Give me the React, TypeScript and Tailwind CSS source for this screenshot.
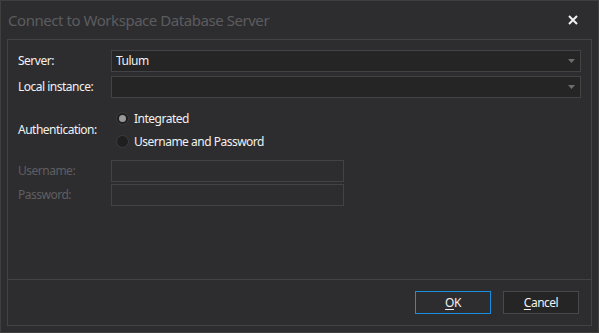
import React from 'react'

const font = { fontFamily: '"Noto Sans", "Open Sans", sans-serif' }

function Caret() {
  return (
    <svg width="7" height="4" viewBox="0 0 7 4" className="shrink-0">
      <path d="M0 0 L7 0 L3.5 4 Z" fill="#6e6e6e" />
    </svg>
  )
}

function Combo({ value }: { value?: string }) {
  return (
    <div className="flex h-[22px] flex-1 items-center border border-[#434346] bg-[#252526] pl-[4px] pr-[5px]">
      <span className="flex-1 text-[12px] text-[#f1f1f1]">{value}</span>
      <Caret />
    </div>
  )
}

function Radio({ checked, label }: { checked?: boolean; label: string }) {
  return (
    <div className="flex h-[23px] items-center gap-[5px]">
      <span className="flex h-[13px] w-[13px] items-center justify-center rounded-full border border-[#3c3c3c] bg-[#1f1f1f]">
        {checked && <span className="h-[7px] w-[7px] rounded-full bg-[#9a9a9a]" />}
      </span>
      <span className="text-[12px] text-[#f1f1f1]">{label}</span>
    </div>
  )
}

export default function App() {
  return (
    <div
      style={font}
      className="flex h-[333px] w-[599px] flex-col border border-[#3f3f3f] bg-[#2d2d30] tracking-[-0.5px]"
    >
      {/* title bar */}
      <div className="flex h-[38px] items-center justify-between pl-[7px] pr-[20px]">
        <span className="text-[15px] tracking-[-0.45px] text-[#5c5c5e]">Connect to Workspace Database Server</span>
        <svg width="10" height="10" viewBox="0 0 10 10">
          <path d="M1 1 L9 9 M9 1 L1 9" stroke="#f1f1f1" strokeWidth="2" />
        </svg>
      </div>

      <div className="mx-[6px] mb-[6px] flex flex-1 flex-col border border-[#434346]">
        <div className="flex flex-1 flex-col pl-[10px] pr-[10px] pt-[10px]">
          <div className="flex items-center">
            <span className="w-[93px] text-[12px] text-[#f1f1f1]">Server:</span>
            <Combo value="Tulum" />
          </div>
          <div className="mt-[4px] flex items-center">
            <span className="w-[93px] text-[12px] text-[#f1f1f1]">Local instance:</span>
            <Combo />
          </div>

          <div className="mt-[9px] flex items-center">
            <span className="w-[98px] text-[12px] text-[#f1f1f1]">Authentication:</span>
            <div className="flex flex-col">
              <Radio checked label="Integrated" />
              <Radio label="Username and Password" />
            </div>
          </div>

          <div className="mt-[7px] flex items-center">
            <span className="w-[93px] text-[12px] text-[#5f5f61]">Username:</span>
            <div className="h-[22px] w-[233px] border border-[#434346] bg-[#2d2d30]" />
          </div>
          <div className="mt-[2px] flex items-center">
            <span className="w-[93px] text-[12px] text-[#5f5f61]">Password:</span>
            <div className="h-[22px] w-[233px] border border-[#434346] bg-[#2d2d30]" />
          </div>
        </div>

        <div className="flex h-[46px] items-start justify-end gap-[12px] border-t border-[#434346] pr-[12px] pt-[11px]">
          <button className="flex h-[23px] w-[76px] items-center justify-center border border-[#1c8ee0] bg-[#2d2d30] text-[12px] text-[#f1f1f1]">
            <span className="underline underline-offset-2">O</span>K
          </button>
          <button className="flex h-[23px] w-[76px] items-center justify-center border border-[#48484a] bg-[#252526] text-[12px] text-[#f1f1f1]">
            <span className="underline underline-offset-2">C</span>ancel
          </button>
        </div>
      </div>
    </div>
  )
}
